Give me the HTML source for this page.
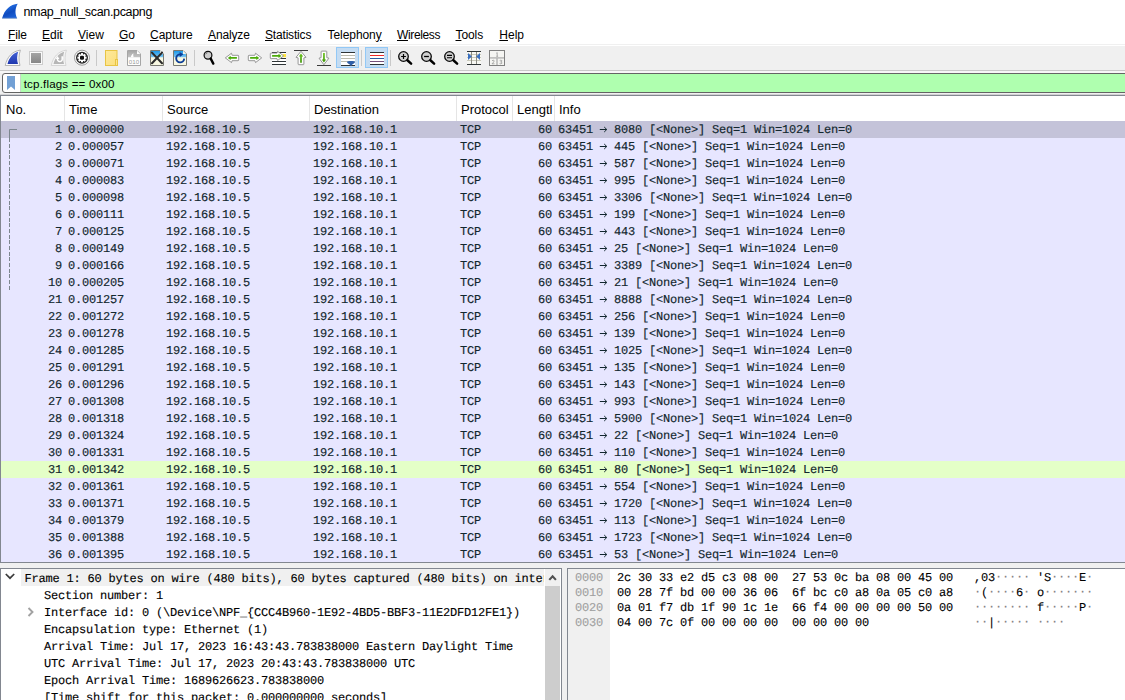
<!DOCTYPE html>
<html><head><meta charset="utf-8"><title>nmap_null_scan.pcapng</title>
<style>
html,body{margin:0;padding:0}
body{width:1125px;height:700px;overflow:hidden;background:#f0f0f0;position:relative;font-family:"Liberation Sans",sans-serif;font-size:12px;color:#000}
u{text-decoration:underline;text-underline-offset:1px;text-decoration-thickness:1px}
#title{position:absolute;left:0;top:0;width:1125px;height:24px;background:#fff}
#title .tt{position:absolute;left:23.5px;top:5px;font-size:12.5px;letter-spacing:-0.33px;line-height:15px;white-space:nowrap}
#ticon{position:absolute;left:0;top:0}
#menu{position:absolute;left:0;top:24px;width:1125px;height:20px;background:#fff}
.mi{position:absolute;top:4px;font-size:12px;line-height:14px;white-space:nowrap}
#toolbar{position:absolute;left:0;top:44px;width:1125px;height:26px;background:#f0f0f0;border-top:1px solid #f0f0f0;box-sizing:border-box}
#toolbar::before{content:"";position:absolute;left:0;top:0;width:1125px;height:1px;background:#fff}
#tbline{position:absolute;left:0;top:70px;width:1125px;height:1px;background:#c8c8c8}
#tbsvg{position:absolute;left:0;top:-1px}
.tsep{position:absolute;top:5px;width:1px;height:16px;background:#c9c9c9}
.tsel{position:absolute;top:2px;height:19px;width:21px;background:#c5dcf2;border:1px solid #92c8f6}
#fgap{position:absolute;left:0;top:71px;width:1125px;height:2px;background:#f7f7f7}
#filter{position:absolute;left:2px;top:73px;width:1130px;height:18px;border:1px solid #646464;border-radius:3px;background:#fff;overflow:hidden}
#fbm{position:absolute;left:4px;top:2px;width:8px;height:14px}
#fbm svg{display:block}
#ftext{position:absolute;left:17px;top:0;right:0;height:18px;background:#afffaf;border-left:1px solid #c9d6c9}
#ftext span{position:absolute;left:2.7px;top:2px;font-size:11.6px;letter-spacing:0.16px;line-height:16px;white-space:nowrap}
#pgrad{position:absolute;left:0;top:94px;width:1125px;height:1px;background:#d2d2d4}
#plist{position:absolute;left:0;top:95px;width:1130px;height:466px;border-left:1px solid #828790;border-top:1px solid #828790;border-bottom:1px solid #828790;background:#e7e6ff;overflow:hidden}
#phead{position:relative;width:1130px;height:25px;background:#fff}
.hc{position:absolute;top:5px;font-size:13px;line-height:17px;white-space:nowrap}
.hs{position:absolute;top:0;width:1px;height:25px;background:#e5e5e5}
.pr{position:relative;height:17px;width:1130px;background:#e7e6ff;font-family:"Liberation Mono",monospace;font-size:12px;letter-spacing:-0.2px;line-height:18px;white-space:pre;color:#12272e;text-rendering:geometricPrecision;-webkit-text-stroke:0.15px #12272e}
.pr.sel{background:#c4c3d9}
.pr.grn{background:#e4ffc7}
.c{position:absolute;top:0}
.ar{display:inline-block;vertical-align:baseline;position:relative;top:0px;overflow:visible}
.ar path{fill:none;stroke:#12272e;stroke-width:1}
.no{right:1069px}
.tm{left:67px}
.src{left:165px}
.dst{left:312px}
.pro{left:459px}
.len{right:579px}
.inf{left:557px}
#rel{position:absolute;left:0;top:0}
#detail{position:absolute;left:0;top:568px;width:560px;height:140px;border:1px solid #828790;background:#fff;overflow:hidden}
#dclip{position:absolute;left:0;top:0;width:543px;height:140px;overflow:hidden}
.dr{position:relative;height:17px;white-space:pre;font-family:"Liberation Mono",monospace;font-size:12px;letter-spacing:-0.2px;line-height:18px;color:#000;text-rendering:geometricPrecision;-webkit-text-stroke:0.12px #000}
.d0::before{content:"";position:absolute;left:20px;top:0;width:523px;height:17px;background:#f0f0f0}
.dt{position:absolute;top:1px}
.l0{left:23.5px}
.l1{left:43px}
.chv{position:absolute;left:4.4px;top:4.3px}
.chr{position:absolute;left:26px;top:4px}
#dscroll{position:absolute;left:544px;top:0;width:15px;height:140px;background:#f0f0f0}
#dthumb{position:absolute;left:0;top:17px;width:15px;height:130px;background:#cdcdcd}
#bytes{position:absolute;left:567px;top:568px;width:570px;height:140px;border:1px solid #828790;background:#fff;overflow:hidden}
#boff{position:absolute;left:0;top:0;width:42px;height:140px;background:#f0f0f0}
.br{position:absolute;left:0;height:15px;width:560px;font-family:"Liberation Mono",monospace;font-size:12px;letter-spacing:-0.2px;line-height:16px;white-space:pre;text-rendering:geometricPrecision;-webkit-text-stroke:0.1px}
.bo{position:absolute;left:7px;color:#a0a0a0}
.bh{position:absolute;left:49px}
.ba{position:absolute;left:406px}
.md{color:#7d7d7d;position:relative;top:-0.6px}

</style></head>
<body>
<div id="title"><svg id="ticon" width="20" height="22" viewBox="0 0 20 22"><defs><linearGradient id="gt" x1="0.2" y1="0" x2="0.7" y2="1"><stop offset="0" stop-color="#2a7cf0"/><stop offset="0.6" stop-color="#0f4cc0"/><stop offset="1" stop-color="#1d62d8"/></linearGradient></defs><path d="M17.7 3.8C10.500 4.400 4.500 9.500 2.100 18.300H17.100C14.900 14 14.900 8.500 17.700 3.800Z" fill="url(#gt)"/><path d="M2.100 18.300H17.100" stroke="#7f9fd0" stroke-width="0.9"/></svg><span class="tt">nmap_null_scan.pcapng</span></div>
<div id="menu"><span class="mi" style="left:8px;letter-spacing:-0.16px"><u>F</u>ile</span><span class="mi" style="left:42px"><u>E</u>dit</span><span class="mi" style="left:78px"><u>V</u>iew</span><span class="mi" style="left:119px;letter-spacing:-0.16px"><u>G</u>o</span><span class="mi" style="left:150px"><u>C</u>apture</span><span class="mi" style="left:208px;letter-spacing:-0.13px"><u>A</u>nalyze</span><span class="mi" style="left:265px;letter-spacing:-0.18px"><u>S</u>tatistics</span><span class="mi" style="left:327.5px;letter-spacing:-0.06px">Telephon<u>y</u></span><span class="mi" style="left:397px;letter-spacing:-0.37px"><u>W</u>ireless</span><span class="mi" style="left:455.5px;letter-spacing:-0.08px"><u>T</u>ools</span><span class="mi" style="left:499.3px"><u>H</u>elp</span></div>
<div id="toolbar">
<i class="tsel" style="left:336px"></i><i class="tsel" style="left:365px"></i>
<i class="tsep" style="left:96px"></i><i class="tsep" style="left:194px"></i><i class="tsep" style="left:361px"></i><i class="tsep" style="left:390px"></i>
<svg id="tbsvg" width="1125" height="28" viewBox="0 44 1125 28">
<defs>
<linearGradient id="gfin" x1="0" y1="0" x2="0" y2="1"><stop offset="0" stop-color="#4462d6"/><stop offset="1" stop-color="#1f37ae"/></linearGradient>
<linearGradient id="gstop" x1="0" y1="0" x2="0" y2="1"><stop offset="0" stop-color="#a4a4a4"/><stop offset="1" stop-color="#868686"/></linearGradient>
<linearGradient id="gfold" x1="0" y1="0" x2="1" y2="1"><stop offset="0" stop-color="#fee99c"/><stop offset="1" stop-color="#fbdf7c"/></linearGradient>
<linearGradient id="ggray" x1="0" y1="0" x2="0" y2="1"><stop offset="0" stop-color="#a8a8a8"/><stop offset="1" stop-color="#c4c4c4"/></linearGradient>
<linearGradient id="gsky" x1="0" y1="0" x2="0" y2="1"><stop offset="0" stop-color="#1c98e8"/><stop offset="1" stop-color="#7cc6f2"/></linearGradient>
<linearGradient id="ggrn" x1="0" y1="0" x2="0" y2="1"><stop offset="0" stop-color="#6cc21c"/><stop offset="1" stop-color="#3d9506"/></linearGradient>
</defs>
<!-- 1 start capture (blue fin) -->
<path d="M20.4 50.1C12.3 51.2 7 57 5.2 65.5H20C18.6 60.5 18.6 55.2 20.4 50.1Z" fill="#fbfbfb" stroke="#aeaeae" stroke-width="0.9"/>
<path d="M18.2 51.8C12.6 53.4 9 58 7.5 64H18C16.8 60 16.8 56 18.2 51.8Z" fill="url(#gfin)"/>
<!-- 2 stop -->
<rect x="29.5" y="51.5" width="13" height="13" fill="#fafafa" stroke="#cdcdcd" stroke-width="1"/>
<rect x="31" y="53" width="10" height="10" fill="url(#gstop)"/>
<!-- 3 restart (gray fin) -->
<path d="M66.4 50.1C58.3 51.2 53 57 51.2 65.5H66C64.6 60.5 64.6 55.2 66.4 50.1Z" fill="#f6f6f6" stroke="#d2d2d2" stroke-width="0.9"/>
<path d="M64.2 51.8C58.6 53.4 55 58 53.5 64H64C62.8 60 62.8 56 64.2 51.8Z" fill="#b6b6b6"/>
<path d="M57.5 58.6A2.4 2.4 0 1 0 62.2 58.8V56.2" fill="none" stroke="#fff" stroke-width="1.5"/>
<path d="M55.7 59L57.6 55.9L59.4 59Z" fill="#fff"/>
<!-- 4 options (gear) -->
<circle cx="82" cy="57.7" r="7.5" fill="#fdfdfd" stroke="#8e8e8e" stroke-width="0.9"/>
<circle cx="82" cy="57.7" r="6" fill="#262626"/>
<g fill="#fff"><circle cx="82" cy="57.7" r="3.5"/>
<g transform="translate(82 57.7)"><rect x="-1" y="-4.6" width="2" height="9.2"/><rect x="-1" y="-4.6" width="2" height="9.2" transform="rotate(45)"/><rect x="-1" y="-4.6" width="2" height="9.2" transform="rotate(90)"/><rect x="-1" y="-4.6" width="2" height="9.2" transform="rotate(135)"/></g></g>
<rect x="80" y="55.700" width="4" height="4" rx="1.300" fill="#111"/>
<!-- 5 open folder -->
<rect x="105.5" y="50.5" width="11.5" height="15" fill="url(#gfold)" stroke="#e8c444" stroke-width="1"/>
<rect x="115.5" y="59.5" width="2" height="6" fill="#fde58c" stroke="#e8c444" stroke-width="1"/>
<!-- 6 save (gray file) -->
<path d="M127.5 50.5H137L140.5 54V65.5H127.5Z" fill="#fff" stroke="#a6a6a6" stroke-width="1"/>
<path d="M128 51H136.8L140 54.2V57.2H128Z" fill="url(#ggray)"/>
<path d="M137 50.8V54H140.2Z" fill="#fff"/>
<path d="M130.8 57.2C131.2 55.6 132 54.2 133.4 53.2C133.1 54.6 133.2 56 133.6 57.2Z" fill="#fff"/>
<text x="128.8" y="63.6" font-family="Liberation Sans, sans-serif" font-size="6.2" fill="#9a9a9a">010</text>
<!-- 7 close file -->
<path d="M150.5 50.5H160L163.5 54V65.5H150.5Z" fill="#f8f8e2" stroke="#7a7a72" stroke-width="1"/>
<path d="M151 51H159.8L163 54.2V57.2H151Z" fill="url(#gsky)"/>
<path d="M160 50.8V54H163.2Z" fill="#f4f4ec"/>
<path d="M152 52.6L162 63.2M162 52.6L152 63.2" fill="none" stroke="#2b2b2b" stroke-width="2.1" stroke-linecap="round"/>
<!-- 8 reload -->
<path d="M173.500 50.5H183L186.500 54V65.5H173.500Z" fill="#f8f8e2" stroke="#7a7a72" stroke-width="1"/>
<path d="M174 51H182.800L186 54.2V57.2H174Z" fill="url(#gsky)"/>
<path d="M183 50.800V54H186.200Z" fill="#f4f4ec"/>
<path d="M180.300 54.400A4 4 0 1 0 184.200 58.600" fill="none" stroke="#0b3c96" stroke-width="1.9"/>
<path d="M179.600 51.900L183.400 54.300L179.800 56.900Z" fill="#0b3c96"/>
<!-- 9 find -->
<circle cx="208" cy="55.2" r="3.9" fill="#cdcdcd" stroke="#0c0c0c" stroke-width="1.2"/>
<path d="M205.600 54.300A2.500 2.500 0 0 1 207.400 52.800" fill="none" stroke="#222" stroke-width="0.5"/>
<path d="M210.700 58.600L213.300 63.600" stroke="#000" stroke-width="2.4" stroke-linecap="round"/>
<!-- 10 back -->
<path d="M225.300 57.900L231.500 53.200L232.100 55.300H238Q238.700 55.300 238.700 56V59.900Q238.700 60.700 238 60.700H232.100L231.500 62.600Z" fill="#fdfdfd" stroke="#8c8c8c" stroke-width="0.9" stroke-linejoin="round"/>
<path d="M227.800 57.900L230.700 55.700V57.100H236.900V58.800H230.700V60.100Z" fill="#4cab0a"/>
<!-- 11 forward -->
<path d="M261.700 57.900L255.500 53.200L254.900 55.300H249Q248.300 55.300 248.300 56V59.900Q248.300 60.700 249 60.700H254.900L255.500 62.600Z" fill="#fdfdfd" stroke="#8c8c8c" stroke-width="0.9" stroke-linejoin="round"/>
<path d="M259.200 57.900L256.300 55.700V57.100H250.100V58.800H256.300V60.100Z" fill="#4cab0a"/>
<!-- 12 goto -->
<rect x="272" y="52" width="14" height="13" fill="#fff"/>
<rect x="282.500" y="54" width="3.500" height="3.200" fill="#ffe53e"/>
<path d="M272 52.500H286M272 58.500H286M272 61.500H286M272 64.500H286" stroke="#2e3436" stroke-width="1"/>
<path d="M283.600 55.900L277.600 51.300L277 53.100H271Q270.300 53.100 270.300 53.800V58Q270.300 58.700 271 58.700H277L277.600 60.500Z" fill="#fdfdfd" stroke="#8c8c8c" stroke-width="0.9" stroke-linejoin="round"/>
<path d="M281.400 55.900L278.500 53.700V55.050H272.100V56.750H278.500V58.100Z" fill="#4cab0a"/>
<!-- 13 first -->
<path d="M294 50.500H308" stroke="#3a3a3a" stroke-width="1"/>
<path d="M301 51.300L306 57.300L303.900 57.900V64Q303.900 64.700 303.200 64.700H298.800Q298.100 64.700 298.100 64V57.900L296 57.300Z" fill="#fdfdfd" stroke="#8c8c8c" stroke-width="0.9" stroke-linejoin="round"/>
<path d="M301 53.600L303.200 56.500H301.850V62.700H300.150V56.500H298.800Z" fill="url(#ggrn)"/>
<!-- 14 last -->
<path d="M317 65.500H331" stroke="#3a3a3a" stroke-width="1"/>
<path d="M323.900 64.700L328.900 58.200L326.800 57.600V51.800Q326.800 51.100 326.100 51.100H321.800Q321.100 51.100 321.100 51.800V57.600L319 58.200Z" fill="#fdfdfd" stroke="#8c8c8c" stroke-width="0.9" stroke-linejoin="round"/>
<path d="M323.950 62.400L326.150 59.500H324.800V53.100H323.100V59.500H321.750Z" fill="url(#ggrn)"/>
<!-- 15 autoscroll (selected) -->
<rect x="341" y="52" width="14" height="14" fill="#fff"/>
<path d="M341 55.500H355M341 58.500H355M341 61.500H355" stroke="#babaae" stroke-width="1"/>
<path d="M341 52.500H355M341 65.500H355" stroke="#2e3436" stroke-width="1"/>
<path d="M347 62C347 61.300 349 61 351 61S355 61.300 355 62C355 63.200 353 63.800 352.300 64.600L351 66.200L349.700 64.600C349 63.800 347 63.200 347 62Z" fill="#2f5fa8"/>
<!-- 16 colorize (selected) -->
<rect x="370" y="52" width="14" height="13" fill="#fff"/>
<path d="M370 52.500H384M370 64.500H384" stroke="#2e3436" stroke-width="1"/>
<path d="M370 55.500H384" stroke="#ef2929" stroke-width="1"/>
<path d="M370 58.500H384" stroke="#2c5aa0" stroke-width="1"/>
<path d="M370 61.500H384" stroke="#75507b" stroke-width="1"/>
<!-- 17 zoom in -->
<circle cx="403.500" cy="56.500" r="4.800" fill="#d0d0d0" stroke="#0a0a0a" stroke-width="1.300"/>
<path d="M401.100 56.500H405.900M403.500 54.100V58.900" stroke="#000" stroke-width="1.200"/>
<path d="M407.400 60.300L411.100 63.600" stroke="#000" stroke-width="2.500" stroke-linecap="round"/>
<!-- 18 zoom out -->
<circle cx="426.500" cy="56.500" r="4.800" fill="#d0d0d0" stroke="#0a0a0a" stroke-width="1.300"/>
<path d="M424.100 56.500H428.900" stroke="#000" stroke-width="1.300"/>
<path d="M430.400 60.300L434.100 63.600" stroke="#000" stroke-width="2.500" stroke-linecap="round"/>
<!-- 19 zoom reset -->
<circle cx="449.500" cy="56.500" r="4.800" fill="#d0d0d0" stroke="#0a0a0a" stroke-width="1.300"/>
<path d="M447 55.400H452M447 57.700H452" stroke="#000" stroke-width="1.100"/>
<path d="M453.400 60.300L457.100 63.600" stroke="#000" stroke-width="2.500" stroke-linecap="round"/>
<!-- 20 resize columns -->
<rect x="467" y="51" width="14" height="14" fill="#f8f8f4"/>
<path d="M467 54.500H481M467 57.500H481M467 60.500H481" stroke="#c8c8ba" stroke-width="1"/>
<path d="M471.500 51V65M476.500 51V65" stroke="#8c8c84" stroke-width="1"/>
<path d="M467 51.500H481M467 64.500H481" stroke="#2e3436" stroke-width="1"/>
<path d="M468 53V60L471.800 56.500Z" fill="#3a6fc0"/>
<path d="M480 53V60L476.200 56.500Z" fill="#3a6fc0"/>
<!-- 21 layout -->
<rect x="489.500" y="50.500" width="15" height="15" fill="#f5f5f2" stroke="#808080" stroke-width="1"/>
<path d="M490 57.900H504" stroke="#b6b6b6" stroke-width="1.500"/>
<path d="M497 58V65" stroke="#b6b6b6" stroke-width="1.500"/>
<g fill="none" stroke="#8e8e8e" stroke-width="0.7"><path d="M496.300 53.200L497.200 52.600V56.300M496.300 56.300H498.100"/><path d="M492 60.800Q493.200 59.600 494.100 60.600Q494.600 61.600 492 63.800H494.500"/><path d="M499.700 60.600Q501 59.700 501.800 60.500Q502.200 61.600 500.600 61.900Q502.400 62.200 501.900 63.300Q501 64.300 499.600 63.500"/></g>
</svg>
</div><div id="tbline"></div>
<div id="fgap"></div><div id="filter"><div id="fbm"><svg width="8" height="14" viewBox="0 0 8 14"><path d="M0 0H8V14L4 10.5L0 14Z" fill="#72a0d5"/></svg></div><div id="ftext"><span>tcp.flags == 0x00</span></div></div>
<div id="pgrad"></div><div id="plist">
<div id="phead"><span class="hc" style="left:5px">No.</span><span class="hc" style="left:68px">Time</span><span class="hc" style="left:166px">Source</span><span class="hc" style="left:313px">Destination</span><span class="hc" style="left:460px">Protocol</span><span class="hc" style="left:516px">Lengtl</span><span class="hc" style="left:558px">Info</span><i class="hs" style="left:63px"></i><i class="hs" style="left:161px"></i><i class="hs" style="left:308px"></i><i class="hs" style="left:455px"></i><i class="hs" style="left:511px"></i><i class="hs" style="left:553px"></i></div>
<div class="pr sel"><span class="c no">1</span><span class="c tm">0.000000</span><span class="c src">192.168.10.5</span><span class="c dst">192.168.10.1</span><span class="c pro">TCP</span><span class="c len">60</span><span class="c inf">63451 <svg class="ar" width="7" height="7" viewBox="0 0 7 7"><path d="M-0.2 3.5H6.6M4.2 1L6.8 3.5L4.2 6"/></svg> 8080 [&lt;None&gt;] Seq=1 Win=1024 Len=0</span></div>
<div class="pr"><span class="c no">2</span><span class="c tm">0.000057</span><span class="c src">192.168.10.5</span><span class="c dst">192.168.10.1</span><span class="c pro">TCP</span><span class="c len">60</span><span class="c inf">63451 <svg class="ar" width="7" height="7" viewBox="0 0 7 7"><path d="M-0.2 3.5H6.6M4.2 1L6.8 3.5L4.2 6"/></svg> 445 [&lt;None&gt;] Seq=1 Win=1024 Len=0</span></div>
<div class="pr"><span class="c no">3</span><span class="c tm">0.000071</span><span class="c src">192.168.10.5</span><span class="c dst">192.168.10.1</span><span class="c pro">TCP</span><span class="c len">60</span><span class="c inf">63451 <svg class="ar" width="7" height="7" viewBox="0 0 7 7"><path d="M-0.2 3.5H6.6M4.2 1L6.8 3.5L4.2 6"/></svg> 587 [&lt;None&gt;] Seq=1 Win=1024 Len=0</span></div>
<div class="pr"><span class="c no">4</span><span class="c tm">0.000083</span><span class="c src">192.168.10.5</span><span class="c dst">192.168.10.1</span><span class="c pro">TCP</span><span class="c len">60</span><span class="c inf">63451 <svg class="ar" width="7" height="7" viewBox="0 0 7 7"><path d="M-0.2 3.5H6.6M4.2 1L6.8 3.5L4.2 6"/></svg> 995 [&lt;None&gt;] Seq=1 Win=1024 Len=0</span></div>
<div class="pr"><span class="c no">5</span><span class="c tm">0.000098</span><span class="c src">192.168.10.5</span><span class="c dst">192.168.10.1</span><span class="c pro">TCP</span><span class="c len">60</span><span class="c inf">63451 <svg class="ar" width="7" height="7" viewBox="0 0 7 7"><path d="M-0.2 3.5H6.6M4.2 1L6.8 3.5L4.2 6"/></svg> 3306 [&lt;None&gt;] Seq=1 Win=1024 Len=0</span></div>
<div class="pr"><span class="c no">6</span><span class="c tm">0.000111</span><span class="c src">192.168.10.5</span><span class="c dst">192.168.10.1</span><span class="c pro">TCP</span><span class="c len">60</span><span class="c inf">63451 <svg class="ar" width="7" height="7" viewBox="0 0 7 7"><path d="M-0.2 3.5H6.6M4.2 1L6.8 3.5L4.2 6"/></svg> 199 [&lt;None&gt;] Seq=1 Win=1024 Len=0</span></div>
<div class="pr"><span class="c no">7</span><span class="c tm">0.000125</span><span class="c src">192.168.10.5</span><span class="c dst">192.168.10.1</span><span class="c pro">TCP</span><span class="c len">60</span><span class="c inf">63451 <svg class="ar" width="7" height="7" viewBox="0 0 7 7"><path d="M-0.2 3.5H6.6M4.2 1L6.8 3.5L4.2 6"/></svg> 443 [&lt;None&gt;] Seq=1 Win=1024 Len=0</span></div>
<div class="pr"><span class="c no">8</span><span class="c tm">0.000149</span><span class="c src">192.168.10.5</span><span class="c dst">192.168.10.1</span><span class="c pro">TCP</span><span class="c len">60</span><span class="c inf">63451 <svg class="ar" width="7" height="7" viewBox="0 0 7 7"><path d="M-0.2 3.5H6.6M4.2 1L6.8 3.5L4.2 6"/></svg> 25 [&lt;None&gt;] Seq=1 Win=1024 Len=0</span></div>
<div class="pr"><span class="c no">9</span><span class="c tm">0.000166</span><span class="c src">192.168.10.5</span><span class="c dst">192.168.10.1</span><span class="c pro">TCP</span><span class="c len">60</span><span class="c inf">63451 <svg class="ar" width="7" height="7" viewBox="0 0 7 7"><path d="M-0.2 3.5H6.6M4.2 1L6.8 3.5L4.2 6"/></svg> 3389 [&lt;None&gt;] Seq=1 Win=1024 Len=0</span></div>
<div class="pr"><span class="c no">10</span><span class="c tm">0.000205</span><span class="c src">192.168.10.5</span><span class="c dst">192.168.10.1</span><span class="c pro">TCP</span><span class="c len">60</span><span class="c inf">63451 <svg class="ar" width="7" height="7" viewBox="0 0 7 7"><path d="M-0.2 3.5H6.6M4.2 1L6.8 3.5L4.2 6"/></svg> 21 [&lt;None&gt;] Seq=1 Win=1024 Len=0</span></div>
<div class="pr"><span class="c no">21</span><span class="c tm">0.001257</span><span class="c src">192.168.10.5</span><span class="c dst">192.168.10.1</span><span class="c pro">TCP</span><span class="c len">60</span><span class="c inf">63451 <svg class="ar" width="7" height="7" viewBox="0 0 7 7"><path d="M-0.2 3.5H6.6M4.2 1L6.8 3.5L4.2 6"/></svg> 8888 [&lt;None&gt;] Seq=1 Win=1024 Len=0</span></div>
<div class="pr"><span class="c no">22</span><span class="c tm">0.001272</span><span class="c src">192.168.10.5</span><span class="c dst">192.168.10.1</span><span class="c pro">TCP</span><span class="c len">60</span><span class="c inf">63451 <svg class="ar" width="7" height="7" viewBox="0 0 7 7"><path d="M-0.2 3.5H6.6M4.2 1L6.8 3.5L4.2 6"/></svg> 256 [&lt;None&gt;] Seq=1 Win=1024 Len=0</span></div>
<div class="pr"><span class="c no">23</span><span class="c tm">0.001278</span><span class="c src">192.168.10.5</span><span class="c dst">192.168.10.1</span><span class="c pro">TCP</span><span class="c len">60</span><span class="c inf">63451 <svg class="ar" width="7" height="7" viewBox="0 0 7 7"><path d="M-0.2 3.5H6.6M4.2 1L6.8 3.5L4.2 6"/></svg> 139 [&lt;None&gt;] Seq=1 Win=1024 Len=0</span></div>
<div class="pr"><span class="c no">24</span><span class="c tm">0.001285</span><span class="c src">192.168.10.5</span><span class="c dst">192.168.10.1</span><span class="c pro">TCP</span><span class="c len">60</span><span class="c inf">63451 <svg class="ar" width="7" height="7" viewBox="0 0 7 7"><path d="M-0.2 3.5H6.6M4.2 1L6.8 3.5L4.2 6"/></svg> 1025 [&lt;None&gt;] Seq=1 Win=1024 Len=0</span></div>
<div class="pr"><span class="c no">25</span><span class="c tm">0.001291</span><span class="c src">192.168.10.5</span><span class="c dst">192.168.10.1</span><span class="c pro">TCP</span><span class="c len">60</span><span class="c inf">63451 <svg class="ar" width="7" height="7" viewBox="0 0 7 7"><path d="M-0.2 3.5H6.6M4.2 1L6.8 3.5L4.2 6"/></svg> 135 [&lt;None&gt;] Seq=1 Win=1024 Len=0</span></div>
<div class="pr"><span class="c no">26</span><span class="c tm">0.001296</span><span class="c src">192.168.10.5</span><span class="c dst">192.168.10.1</span><span class="c pro">TCP</span><span class="c len">60</span><span class="c inf">63451 <svg class="ar" width="7" height="7" viewBox="0 0 7 7"><path d="M-0.2 3.5H6.6M4.2 1L6.8 3.5L4.2 6"/></svg> 143 [&lt;None&gt;] Seq=1 Win=1024 Len=0</span></div>
<div class="pr"><span class="c no">27</span><span class="c tm">0.001308</span><span class="c src">192.168.10.5</span><span class="c dst">192.168.10.1</span><span class="c pro">TCP</span><span class="c len">60</span><span class="c inf">63451 <svg class="ar" width="7" height="7" viewBox="0 0 7 7"><path d="M-0.2 3.5H6.6M4.2 1L6.8 3.5L4.2 6"/></svg> 993 [&lt;None&gt;] Seq=1 Win=1024 Len=0</span></div>
<div class="pr"><span class="c no">28</span><span class="c tm">0.001318</span><span class="c src">192.168.10.5</span><span class="c dst">192.168.10.1</span><span class="c pro">TCP</span><span class="c len">60</span><span class="c inf">63451 <svg class="ar" width="7" height="7" viewBox="0 0 7 7"><path d="M-0.2 3.5H6.6M4.2 1L6.8 3.5L4.2 6"/></svg> 5900 [&lt;None&gt;] Seq=1 Win=1024 Len=0</span></div>
<div class="pr"><span class="c no">29</span><span class="c tm">0.001324</span><span class="c src">192.168.10.5</span><span class="c dst">192.168.10.1</span><span class="c pro">TCP</span><span class="c len">60</span><span class="c inf">63451 <svg class="ar" width="7" height="7" viewBox="0 0 7 7"><path d="M-0.2 3.5H6.6M4.2 1L6.8 3.5L4.2 6"/></svg> 22 [&lt;None&gt;] Seq=1 Win=1024 Len=0</span></div>
<div class="pr"><span class="c no">30</span><span class="c tm">0.001331</span><span class="c src">192.168.10.5</span><span class="c dst">192.168.10.1</span><span class="c pro">TCP</span><span class="c len">60</span><span class="c inf">63451 <svg class="ar" width="7" height="7" viewBox="0 0 7 7"><path d="M-0.2 3.5H6.6M4.2 1L6.8 3.5L4.2 6"/></svg> 110 [&lt;None&gt;] Seq=1 Win=1024 Len=0</span></div>
<div class="pr grn"><span class="c no">31</span><span class="c tm">0.001342</span><span class="c src">192.168.10.5</span><span class="c dst">192.168.10.1</span><span class="c pro">TCP</span><span class="c len">60</span><span class="c inf">63451 <svg class="ar" width="7" height="7" viewBox="0 0 7 7"><path d="M-0.2 3.5H6.6M4.2 1L6.8 3.5L4.2 6"/></svg> 80 [&lt;None&gt;] Seq=1 Win=1024 Len=0</span></div>
<div class="pr"><span class="c no">32</span><span class="c tm">0.001361</span><span class="c src">192.168.10.5</span><span class="c dst">192.168.10.1</span><span class="c pro">TCP</span><span class="c len">60</span><span class="c inf">63451 <svg class="ar" width="7" height="7" viewBox="0 0 7 7"><path d="M-0.2 3.5H6.6M4.2 1L6.8 3.5L4.2 6"/></svg> 554 [&lt;None&gt;] Seq=1 Win=1024 Len=0</span></div>
<div class="pr"><span class="c no">33</span><span class="c tm">0.001371</span><span class="c src">192.168.10.5</span><span class="c dst">192.168.10.1</span><span class="c pro">TCP</span><span class="c len">60</span><span class="c inf">63451 <svg class="ar" width="7" height="7" viewBox="0 0 7 7"><path d="M-0.2 3.5H6.6M4.2 1L6.8 3.5L4.2 6"/></svg> 1720 [&lt;None&gt;] Seq=1 Win=1024 Len=0</span></div>
<div class="pr"><span class="c no">34</span><span class="c tm">0.001379</span><span class="c src">192.168.10.5</span><span class="c dst">192.168.10.1</span><span class="c pro">TCP</span><span class="c len">60</span><span class="c inf">63451 <svg class="ar" width="7" height="7" viewBox="0 0 7 7"><path d="M-0.2 3.5H6.6M4.2 1L6.8 3.5L4.2 6"/></svg> 113 [&lt;None&gt;] Seq=1 Win=1024 Len=0</span></div>
<div class="pr"><span class="c no">35</span><span class="c tm">0.001388</span><span class="c src">192.168.10.5</span><span class="c dst">192.168.10.1</span><span class="c pro">TCP</span><span class="c len">60</span><span class="c inf">63451 <svg class="ar" width="7" height="7" viewBox="0 0 7 7"><path d="M-0.2 3.5H6.6M4.2 1L6.8 3.5L4.2 6"/></svg> 1723 [&lt;None&gt;] Seq=1 Win=1024 Len=0</span></div>
<div class="pr"><span class="c no">36</span><span class="c tm">0.001395</span><span class="c src">192.168.10.5</span><span class="c dst">192.168.10.1</span><span class="c pro">TCP</span><span class="c len">60</span><span class="c inf">63451 <svg class="ar" width="7" height="7" viewBox="0 0 7 7"><path d="M-0.2 3.5H6.6M4.2 1L6.8 3.5L4.2 6"/></svg> 53 [&lt;None&gt;] Seq=1 Win=1024 Len=0</span></div>
<svg id="rel" width="20" height="200" viewBox="0 0 20 200"><path d="M8.5 42V33.5H16" fill="none" stroke="#7c878e" stroke-width="1"/><path d="M8.5 42V194" fill="none" stroke="#7c878e" stroke-width="1" stroke-dasharray="4 2 4 2 4 1"/></svg></div>
<div id="detail"><div id="dclip">
<div class="dr d0"><svg class="chv" width="10" height="7" viewBox="0 0 10 7"><path d="M0.8 1L5 5.2L9.2 1" fill="none" stroke="#3c3c3c" stroke-width="1.7"/></svg><span class="dt l0">Frame 1: 60 bytes on wire (480 bits), 60 bytes captured (480 bits) on interface</span></div>
<div class="dr"><span class="dt l1">Section number: 1</span></div>
<div class="dr"><svg class="chr" width="7" height="10" viewBox="0 0 7 10"><path d="M1.5 1L5.5 5L1.5 9" fill="none" stroke="#a2a2a2" stroke-width="1.9"/></svg><span class="dt l1">Interface id: 0 (\Device\NPF_{CCC4B960-1E92-4BD5-BBF3-11E2DFD12FE1})</span></div>
<div class="dr"><span class="dt l1">Encapsulation type: Ethernet (1)</span></div>
<div class="dr"><span class="dt l1">Arrival Time: Jul 17, 2023 16:43:43.783838000 Eastern Daylight Time</span></div>
<div class="dr"><span class="dt l1">UTC Arrival Time: Jul 17, 2023 20:43:43.783838000 UTC</span></div>
<div class="dr"><span class="dt l1">Epoch Arrival Time: 1689626623.783838000</span></div>
<div class="dr"><span class="dt l1">[Time shift for this packet: 0.000000000 seconds]</span></div>
</div><div id="dscroll"><svg width="15" height="17" viewBox="0 0 15 17" style="position:absolute;left:0;top:0"><path d="M4.3 10.9L7.6 7.3L10.9 10.9" fill="none" stroke="#505050" stroke-width="2.1"/></svg><div id="dthumb"></div></div></div>
<div id="bytes"><div id="boff"></div>
<div class="br" style="top:1px"><span class="bo">0000</span><span class="bh">2c 30 33 e2 d5 c3 08 00  27 53 0c ba 08 00 45 00</span><span class="ba">,03<span class="md">·····</span> &#x27;S<span class="md">····</span>E<span class="md">·</span></span></div>
<div class="br" style="top:16px"><span class="bo">0010</span><span class="bh">00 28 7f bd 00 00 36 06  6f bc c0 a8 0a 05 c0 a8</span><span class="ba"><span class="md">·</span>(<span class="md">····</span>6<span class="md">·</span> o<span class="md">·······</span></span></div>
<div class="br" style="top:31px"><span class="bo">0020</span><span class="bh">0a 01 f7 db 1f 90 1c 1e  66 f4 00 00 00 00 50 00</span><span class="ba"><span class="md">········</span> f<span class="md">·····</span>P<span class="md">·</span></span></div>
<div class="br" style="top:46px"><span class="bo">0030</span><span class="bh">04 00 7c 0f 00 00 00 00  00 00 00 00</span><span class="ba"><span class="md">··</span>|<span class="md">·····</span> <span class="md">····</span></span></div>
</div>
</body></html>
